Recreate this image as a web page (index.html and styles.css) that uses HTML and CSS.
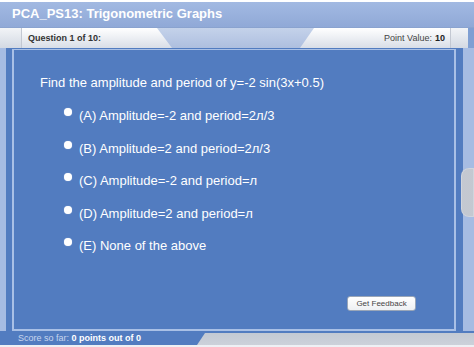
FILE: index.html
```html
<!DOCTYPE html>
<html>
<head>
<meta charset="utf-8">
<link rel="stylesheet" href="styles.css">
</head>
<body>
<div class="app">
  <div class="titlebar"><span class="title">PCA_PS13: Trigonometric Graphs</span></div>
  <div class="qbar">
    <div class="qcap"></div>
    <div class="qtab-left">Question 1 of 10:</div>
    <div class="qgap"></div>
    <div class="qtab-right">Point Value: <b>10</b></div>
    <div class="qcap-right"></div>
    <div class="qend"></div>
  </div>
  <div class="main">
    <div class="edge-left"></div>
    <div class="frame">
      <div class="panel">
        <div class="question">Find the amplitude and period of y=-2 sin(3x+0.5)</div>
        <ul class="options">
          <li class="option"><span class="dot"></span><span class="opt-text">(A) Amplitude=-2 and period=2л/3</span></li>
          <li class="option"><span class="dot"></span><span class="opt-text">(B) Amplitude=2 and period=2л/3</span></li>
          <li class="option"><span class="dot"></span><span class="opt-text">(C) Amplitude=-2 and period=л</span></li>
          <li class="option"><span class="dot"></span><span class="opt-text">(D) Amplitude=2 and period=л</span></li>
          <li class="option"><span class="dot"></span><span class="opt-text">(E) None of the above</span></li>
        </ul>
        <div class="actions"><button class="feedback">Get Feedback</button></div>
      </div>
    </div>
    <div class="edge-right">
      <div class="grip"></div>
    </div>
  </div>
  <div class="footer">
    <div class="score">Score so far: <b>0 points out of 0</b></div>
    <div class="footer-grey"></div>
  </div>
</div>
</body>
</html>
```
FILE: styles.css
```css
html, body {
  margin: 0;
  padding: 0;
  background: #ffffff;
}
body {
  width: 474px;
  height: 347px;
  overflow: hidden;
  font-family: "Liberation Sans", Arial, sans-serif;
}
.app {
  display: flex;
  flex-direction: column;
  width: 474px;
  height: 347px;
  padding-top: 2px;
  box-sizing: border-box;
}
.titlebar {
  height: 26px;
  background: linear-gradient(#a2b9e2, #90a9d7);
  border-bottom: 1px solid #8aa3cf;
  box-sizing: border-box;
  display: flex;
  align-items: center;
  padding-left: 12px;
}
.title {
  color: #ffffff;
  font-weight: bold;
  font-size: 13px;
  margin-top: -3px;
}
.qbar {
  height: 20px;
  display: flex;
  background: linear-gradient(#c4d2ea, #aebfdf);
  font-size: 9px;
  color: #333;
}
.qcap {
  width: 22px;
  background: linear-gradient(#f2f4f7, #d3d9e3);
  border-right: 1px solid #c3c8d2;
  box-sizing: border-box;
}
.qtab-left {
  width: 150px;
  padding-left: 6px;
  box-sizing: border-box;
  display: flex;
  align-items: center;
  font-weight: bold;
  background: linear-gradient(#ffffff, #d9dee7);
  clip-path: polygon(0 0, 135px 0, 150px 100%, 0 100%);
}
.qgap {
  flex: 1;
}
.qtab-right {
  width: 150px;
  padding-right: 5px;
  box-sizing: border-box;
  display: flex;
  align-items: center;
  justify-content: flex-end;
  background: linear-gradient(#ffffff, #d9dee7);
  clip-path: polygon(14px 0, 100% 0, 100% 100%, 0 100%);
  color: #444;
}
.qtab-right b {
  margin-left: 3px;
  color: #222;
}
.qcap-right {
  width: 18px;
  background: linear-gradient(#f2f4f7, #d3d9e3);
  border-left: 1px solid #c3c8d2;
  box-sizing: border-box;
}
.qend {
  width: 6px;
  background: #7f9fd3;
}
.main {
  height: 283px;
  display: flex;
  background: #527cc0;
}
.edge-left {
  width: 6px;
  background: #a6bce3;
}
.frame {
  flex: 1;
  padding: 1px 3px 0 6px;
  display: flex;
}
.panel {
  flex: 1;
  border-left: 2px solid #a9c0e6;
  border-top: 1px solid #a9c0e6;
  border-right: 2px solid #a9c0e6;
  border-bottom: 2px solid #a9c0e6;
  box-sizing: border-box;
  padding: 25px 0 0 26px;
  display: flex;
  flex-direction: column;
  color: #ffffff;
}
.question {
  font-size: 13px;
  line-height: 16px;
}
.options {
  list-style: none;
  margin: 17px 0 0 0;
  padding: 0 0 0 24px;
}
.option {
  display: flex;
  align-items: flex-start;
  font-size: 13px;
  line-height: 16px;
  height: 32.5px;
}
.dot {
  width: 8px;
  height: 8px;
  border-radius: 50%;
  background: #ffffff;
  margin-top: 0px;
  margin-right: 7px;
  flex: none;
  box-shadow: 0 0 1px rgba(255,255,255,0.6);
}
.actions {
  display: flex;
  justify-content: flex-end;
  padding-right: 38px;
  margin-top: auto;
  margin-bottom: 18px;
}
.feedback {
  font-family: "Liberation Sans", Arial, sans-serif;
  font-size: 8px;
  color: #444;
  background: linear-gradient(#ffffff, #eef0f3);
  border: 1px solid #9aa6b8;
  border-radius: 3px;
  width: 69px;
  height: 15px;
  padding: 0;
}
.edge-right {
  width: 15px;
  position: relative;
  display: flex;
  justify-content: flex-end;
}
.edge-right::after {
  content: "";
  width: 11px;
  background: #a6bce3;
}
.grip {
  position: absolute;
  left: 2px;
  top: 120px;
  width: 13px;
  height: 49px;
  border-radius: 8px 0 0 8px;
  background-color: #e6e9ee;
  background-image: radial-gradient(circle, #9aa2ae 0.6px, transparent 0.8px);
  background-size: 2px 2px;
  background-position: 3px 10px;
  background-repeat: repeat;
  box-shadow: inset 0 0 0 1px #d0d5dd;
}
.footer {
  height: 14px;
  display: flex;
  background: #527cc0;
  font-size: 9px;
  border-bottom: 2px solid #eef0f4;
  box-sizing: content-box;
}
.score {
  width: 205px;
  padding-left: 18px;
  box-sizing: border-box;
  color: #c8d6ee;
  display: flex;
  align-items: center;
  white-space: pre;
}
.score b {
  color: #ffffff;
}
.footer-grey {
  flex: 1;
  margin-top: 2px;
  margin-left: -8px;
  background: linear-gradient(#c3c9d3, #ccd1da);
  clip-path: polygon(8px 0, 100% 0, 100% 100%, 0 100%);
}
```
